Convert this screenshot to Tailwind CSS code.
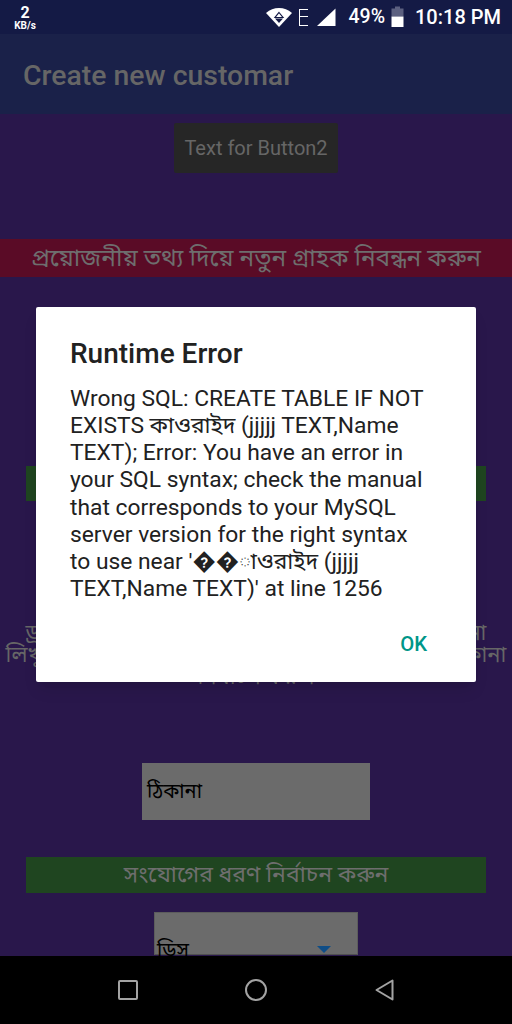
<!DOCTYPE html>
<html lang="bn">
<head>
<meta charset="utf-8">
<script src="https://cdn.jsdelivr.net/npm/@tailwindcss/browser@4"></script>
</head>
<body class="m-0 bg-black">
<div class="relative w-[512px] h-[1024px] overflow-hidden flex flex-col bg-[#29174b] font-['Roboto','Noto_Sans','Noto_Sans_Bengali','Lohit_Bengali',sans-serif]">
  <!-- status bar -->
  <header class="h-[34px] shrink-0 bg-[#141a45] flex items-center text-white">
    <div class="w-[50px] flex flex-col items-center leading-none pt-[2px]">
      <span class="text-[16px] font-bold leading-[16px]">2</span>
      <span class="text-[10px] font-bold leading-[10px]">KB/s</span>
    </div>
    <div class="ml-auto flex items-center">
      <svg width="26" height="22" viewBox="0 0 26 22" class="mr-[7px]"><path d="M0 7C4 3.500 8 2 13 2s9 1.500 13 5L13 21z" fill="#fff"/><path d="M13 6.500l4 5H9z" fill="none" stroke="#141a45" stroke-width="1.200"/><path d="M9 12.500h8l-4 4.500z" fill="#141a45"/></svg>
      <span class="w-[9px] h-[17px] mr-[8px] border-l-[1.500px] border-y-[1.500px] border-white relative"><span class="absolute left-0 right-0 top-[6px] h-[1.500px] bg-white"></span></span>
      <svg width="20" height="20" viewBox="0 0 20 20" class="mr-[12px]"><path d="M19.500 1.500V19H1z" fill="#fff"/></svg>
      <span class="text-[19.500px] font-medium leading-none mr-[6px]">49%</span>
      <svg width="13" height="22" viewBox="0 0 13 22" class="mr-[11px]"><path d="M4 0.500h5v2h3.500v8H0.500v-8H4z" fill="#5c6080"/><path d="M0.500 10.500h12V21h-12z" fill="#fff"/></svg>
      <span class="text-[20px] font-medium leading-none w-[97px]">10:18 PM</span>
    </div>
  </header>
  <!-- app bar -->
  <div class="h-[80px] shrink-0 bg-[#1a2149] flex items-center pl-[23px] pt-[4px]">
    <h1 class="text-[28.400px] font-medium text-[#666666] leading-none">Create new customar</h1>
  </div>
  <!-- content -->
  <main class="flex-1 min-h-0 overflow-hidden flex flex-col items-center">
    <button class="mt-[9px] w-[164px] h-[50px] rounded-[2px] bg-[#262626] text-[#666666] text-[20px] shrink-0">Text for Button2</button>
    <div class="mt-[66px] w-full h-[38px] shrink-0 bg-[#5a0b26] text-[#6e6e6e] text-[24.400px] leading-[38px] text-center whitespace-nowrap">প্রয়োজনীয় তথ্য দিয়ে নতুন গ্রাহক নিবন্ধন করুন</div>
    <div class="mt-[189px] w-[460px] h-[35px] shrink-0 bg-[#1f4520]"></div>
    <div class="mt-[121px] w-full h-[66px] shrink-0 text-[#666666] text-[22px] leading-[22px] text-center whitespace-nowrap">ড্রপডাউন থেকে আপনার বিভাগ নির্বাচন করুন ঠিকানা<br>লিখুন আপনার সঠিক তথ্য দিয়ে গ্রাহকের সঠিক ওই ঠিকানা<br>নির্বাচন করুন</div>
    <div class="mt-[75px] w-[228px] h-[57px] shrink-0 bg-[#6b6b6b] flex items-center pl-[5px] pb-[2px] text-[20px] text-black">ঠিকানা</div>
    <div class="mt-[37px] w-[460px] h-[36px] shrink-0 bg-[#1f4520] text-[#6e6e6e] text-[23px] leading-[36px] text-center">সংযোগের ধরণ নির্বাচন করুন</div>
    <div class="mt-[19px] w-[204px] h-[43px] shrink-0 bg-[#6b6b6b] border border-[#5c5c5c] border-b-[#505050] pl-[2px] pt-[25px] relative text-[20px] leading-[24px] text-black">ডিস<span class="absolute right-[26px] bottom-[1px] w-0 h-0 border-x-[7px] border-x-transparent border-t-[7px] border-t-[#0f4d86]"></span></div>
  </main>
  <!-- nav bar -->
  <nav class="h-[68px] shrink-0 bg-black flex items-center justify-center gap-[96px]">
    <svg width="32" height="32" viewBox="0 0 32 32"><rect x="7" y="7" width="18" height="18" rx="1" fill="none" stroke="#a3a3a3" stroke-width="2"/></svg>
    <svg width="32" height="32" viewBox="0 0 32 32"><circle cx="16" cy="16" r="10" fill="none" stroke="#a3a3a3" stroke-width="2"/></svg>
    <svg width="32" height="32" viewBox="0 0 32 32"><path d="M24.500 6.500v19L8.500 16z" fill="none" stroke="#a3a3a3" stroke-width="2" stroke-linejoin="round"/></svg>
  </nav>
  <!-- dialog -->
  <div class="absolute left-[36px] top-[307px] w-[440px] h-[375px] bg-white rounded-[2px] shadow-lg flex flex-col pl-[34px] pr-[46px]">
    <h2 class="mt-[31px] text-[28px] leading-[32px] font-medium text-[#212121]">Runtime Error</h2>
    <p class="mt-[15px] text-[22.800px] leading-[27.150px] text-[#212121]">Wrong SQL: CREATE TABLE IF NOT EXISTS কাওরাইদ (jjjjj TEXT,Name TEXT); Error: You have an error in your SQL syntax; check the manual that corresponds to your MySQL server version for the right syntax to use near '��াওরাইদ (jjjjj TEXT,Name TEXT)' at line 1256</p>
    <div class="mt-auto mb-[26px] flex justify-end pr-[3px]">
      <span class="text-[20.300px] font-medium text-[#009688] leading-[24px]">OK</span>
    </div>
  </div>
</div>
</body>
</html>
